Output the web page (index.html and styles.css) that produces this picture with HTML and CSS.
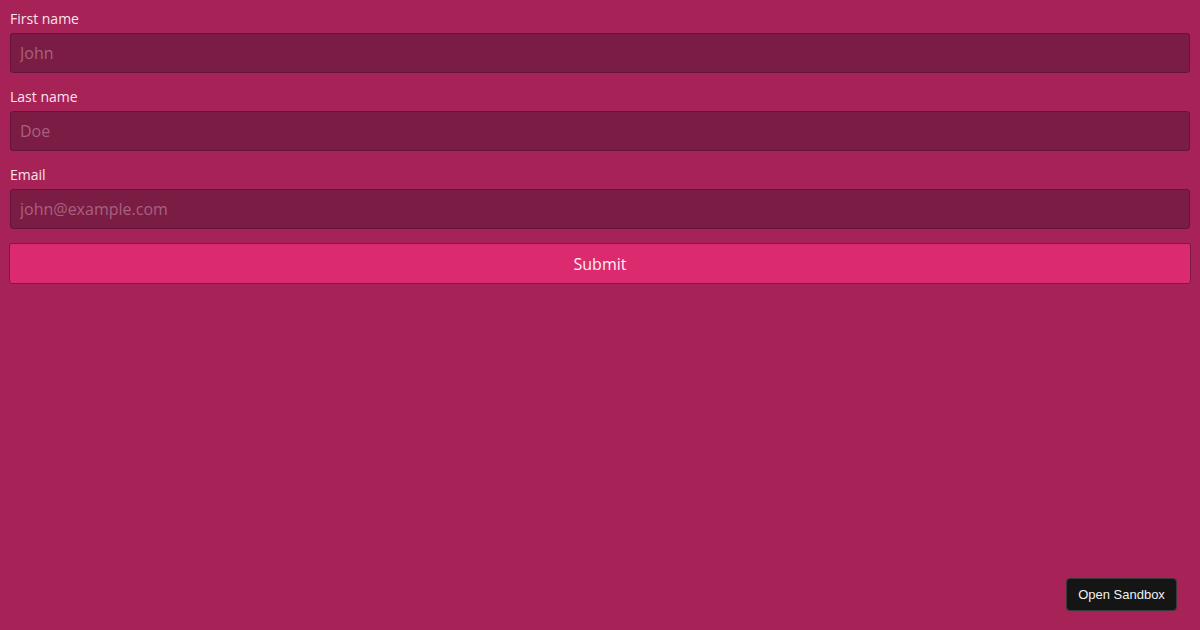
FILE: index.html
```html
<!DOCTYPE html>
<html>
<head>
<meta charset="utf-8">
<link rel="stylesheet" href="styles.css">
</head>
<body>
<form class="form">
  <div class="field">
    <label class="label">First name</label>
    <input class="input" placeholder="John">
  </div>
  <div class="field">
    <label class="label">Last name</label>
    <input class="input" placeholder="Doe">
  </div>
  <div class="field">
    <label class="label">Email</label>
    <input class="input" placeholder="john@example.com">
  </div>
  <button type="button" class="submit">Submit</button>
</form>
<button type="button" class="sandbox">Open Sandbox</button>
</body>
</html>
```
FILE: styles.css
```css
html, body {
  margin: 0;
  height: 100%;
}
body {
  background: #a72257;
  font-family: "Open Sans", "Noto Sans", sans-serif;
  overflow: hidden;
}
.form {
  padding: 10px 10px 0;
  display: flex;
  flex-direction: column;
}
.field {
  display: flex;
  flex-direction: column;
  margin-bottom: 15px;
}
.label {
  color: #fbe3ec;
  font-size: 14px;
  line-height: 17px;
  margin-bottom: 6px;
}
.input {
  box-sizing: border-box;
  height: 40px;
  width: 100%;
  background: #7b1c44;
  border: 1px solid #65133a;
  border-radius: 3px;
  padding: 0 9px;
  font-family: "Open Sans", "Noto Sans", sans-serif;
  font-size: 16px;
  color: #fff;
  outline: none;
}
.input::placeholder {
  color: #a7617f;
}
.submit {
  box-sizing: border-box;
  height: 41px;
  margin: -1px -1px 0;
  background: #dc2a6f;
  border: 1px solid #7f1a45;
  border-radius: 3px;
  color: #fdeef4;
  font-family: "Open Sans", "Noto Sans", sans-serif;
  font-size: 16px;
}
.sandbox {
  position: absolute;
  right: 23px;
  bottom: 19px;
  box-sizing: border-box;
  width: 111px;
  height: 33px;
  background: #151515;
  border: 1px solid #3a3a3a;
  border-radius: 4px;
  color: #f0f0f0;
  font-family: "Liberation Sans", Arial, sans-serif;
  font-size: 13px;
  padding: 0;
}
```
